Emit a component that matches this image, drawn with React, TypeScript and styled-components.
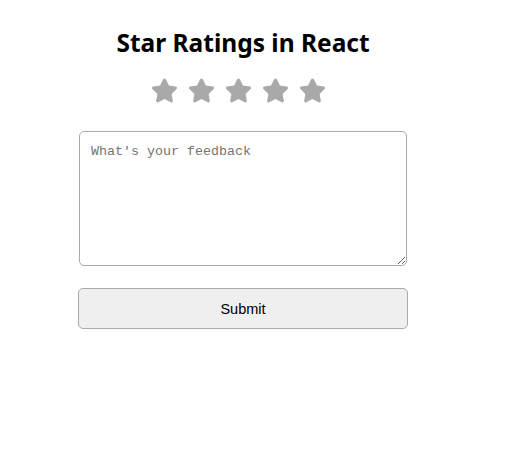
import React, { useState } from "react";
import styled, { createGlobalStyle } from "styled-components";
import { FaStar } from "react-icons/fa";

const Global = createGlobalStyle`
  html, body { margin: 0; padding: 0; background: #ffffff; }
  body { font-family: "Liberation Sans", Arial, sans-serif; }
`;

const Container = styled.div`
  width: 486px;
  display: flex;
  flex-direction: column;
  align-items: center;
  padding-top: 27px;
`;

const Title = styled.h1`
  margin: 0;
  font-family: "Noto Sans", "Open Sans", sans-serif;
  font-weight: 700;
  font-size: 24.5px;
  line-height: 32px;
  color: #000;
`;

const Stars = styled.div`
  display: flex;
  flex-direction: row;
  margin-top: 18px;
`;

const StarIcon = styled(FaStar)<{ $active: boolean }>`
  width: 27px;
  height: 27px;
  margin-right: 10px;
  cursor: pointer;
  color: ${(p) => (p.$active ? "#FFBA5A" : "#a9a9a9")};
  display: block;
`;

const Feedback = styled.textarea`
  box-sizing: border-box;
  width: 328px;
  height: 135px;
  margin: 27px 0 0;
  padding: 12px 11px;
  border: 1px solid #a9a9a9;
  border-radius: 5px;
  font-family: "Liberation Mono", monospace;
  font-size: 13.33px;
  color: #000;
  outline: none;
  &::placeholder { color: #757575; }
`;

const SubmitButton = styled.button`
  box-sizing: border-box;
  width: 330px;
  height: 41px;
  margin-top: 22px;
  border: 1px solid #a9a9a9;
  border-radius: 5px;
  background: #efefef;
  font-family: "Liberation Sans", Arial, sans-serif;
  font-size: 14.5px;
  color: #000;
  cursor: pointer;
`;

export default function App() {
  const [rating, setRating] = useState(0);
  const [hover, setHover] = useState(0);
  return (
    <>
      <Global />
      <Container>
        <Title>Star Ratings in React</Title>
        <Stars>
          {[1, 2, 3, 4, 5].map((n) => (
            <StarIcon
              key={n}
              $active={(hover || rating) >= n}
              onClick={() => setRating(n)}
              onMouseOver={() => setHover(n)}
              onMouseLeave={() => setHover(0)}
            />
          ))}
        </Stars>
        <Feedback placeholder="What's your feedback" />
        <SubmitButton>Submit</SubmitButton>
      </Container>
    </>
  );
}
